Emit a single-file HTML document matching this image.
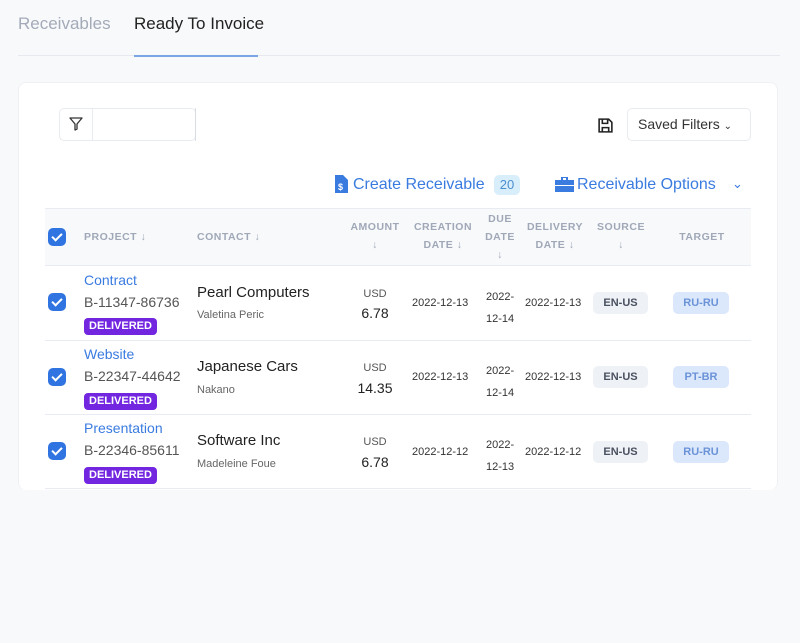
<!DOCTYPE html>
<html><head><style>
*{margin:0;padding:0;box-sizing:border-box}
body{width:800px;height:643px;background:#f8f9fb;font-family:"Liberation Sans",sans-serif;position:relative;overflow:hidden;color:#212529}
.a{position:absolute;white-space:nowrap}
.card{position:absolute;left:18px;top:82px;width:760px;height:408px;background:#fff;border-radius:8px;border:1px solid #eef0f4;border-bottom:none;overflow:hidden}
.bottom{position:absolute;left:8px;top:490px;width:792px;height:153px;background:#f8f9fb}
.th{font-size:10.5px;color:#a0a8b8;font-weight:bold;letter-spacing:.5px;line-height:18px;text-align:center}
.cb{position:absolute;width:18px;height:18px;border-radius:5px;background:#2f74e0}
.cb:after{content:"";position:absolute;left:6px;top:3px;width:4px;height:8px;border:solid #fff;border-width:0 2px 2px 0;transform:rotate(45deg)}
.pill{position:absolute;height:22px;border-radius:5px;font-size:11px;line-height:22px;text-align:center;font-weight:bold}
.src{background:#eef1f6;color:#4a5160;width:55px;left:593px}
.tgt{background:#dbe7fb;color:#6b93d8;width:56px;left:673px}
.del{position:absolute;left:84px;background:#7226e0;color:#fff;font-size:11px;font-weight:bold;border-radius:4px;padding:0 5px;height:17px;line-height:17px}
.hr{position:absolute;left:45px;width:706px;height:1px;background:#e8ecf2}
</style></head><body>
<div class="a" style="left:18px;top:14px;font-size:17px;color:#a3aab8">Receivables</div>
<div class="a" style="left:134px;top:14px;font-size:17px;color:#222">Ready To Invoice</div>
<div class="a" style="left:18px;top:55px;width:762px;height:1px;background:#e6e9ef"></div>
<div class="a" style="left:134px;top:55px;width:124px;height:2px;background:#7aa6e6"></div>
<div class="card"></div>
<div class="a" style="left:59px;top:108px;width:137px;height:33px;border:1px solid #e8ebf0;border-radius:5px;background:#fff"></div>
<div class="a" style="left:92px;top:108px;width:1px;height:33px;background:#e8ebf0"></div>
<div class="a" style="left:195px;top:108px;width:1px;height:33px;background:#d8dce3"></div>
<svg class="a" style="left:68px;top:116px" width="16" height="16" viewBox="0 0 16 16"><path d="M2 2h12l-5 6v5l-2 1V8z" fill="none" stroke="#333" stroke-width="1.3" stroke-linejoin="round"/></svg>
<svg class="a" style="left:597px;top:117px" width="17" height="17" viewBox="0 0 16 16"><path d="M2 2h9l3 3v9H2z M5 2v4h5V2 M5 14v-4h6v4" fill="none" stroke="#222" stroke-width="1.5"/></svg>
<div class="a" style="left:627px;top:108px;width:124px;height:33px;border:1px solid #e8ebf0;border-radius:5px;background:#fff;font-size:14px;line-height:31px;padding-left:10px;color:#333">Saved Filters <span style="font-size:10px">&#8964;</span></div>
<svg class="a" style="left:335px;top:175px" width="13" height="18" viewBox="0 0 13 18"><path d="M0 0h8l5 5v13H0z" fill="#3a7be0"/><text x="3" y="15" font-size="9" fill="#fff" font-family="Liberation Sans" font-weight="bold">$</text></svg>
<div class="a" style="left:353px;top:176px;font-size:16px;color:#3a7be0">Create Receivable</div>
<div class="a" style="left:494px;top:175px;width:26px;height:20px;background:#d9eefb;border-radius:5px;font-size:13px;color:#4a8fd0;text-align:center;line-height:20px">20</div>
<svg class="a" style="left:555px;top:176px" width="19" height="16" viewBox="0 0 19 16"><path d="M6 4V1h7v3h6v5H0V4z M8 2v2h3V2z M0 10h19v6H0z" fill="#3a7be0" fill-rule="evenodd"/></svg>
<div class="a" style="left:577px;top:176px;font-size:16px;color:#3a7be0">Receivable Options</div>
<div class="a" style="left:732px;top:176px;font-size:13px;color:#3a7be0">&#8964;</div>
<div class="a" style="left:45px;top:208px;width:706px;height:58px;background:#f7f9fb;border-top:1px solid #e8ecf2;border-bottom:1px solid #e8ecf2"></div>
<div class="cb" style="left:48px;top:228px"></div>
<div class="a th" style="left:84px;top:228px">PROJECT ↓</div>
<div class="a th" style="left:197px;top:228px">CONTACT ↓</div>
<div class="a th" style="left:346px;top:218px;width:58px">AMOUNT<br>↓</div>
<div class="a th" style="left:410px;top:218px;width:66px">CREATION<br>DATE ↓</div>
<div class="a th" style="left:484px;top:210px;width:32px">DUE<br>DATE<br>↓</div>
<div class="a th" style="left:524px;top:218px;width:62px">DELIVERY<br>DATE ↓</div>
<div class="a th" style="left:594px;top:218px;width:54px">SOURCE<br>↓</div>
<div class="a th" style="left:672px;top:228px;width:60px">TARGET</div>

<div class="hr" style="top:340px"></div><div class="hr" style="top:414px"></div><div class="hr" style="top:488px"></div>

<div class="cb" style="left:48px;top:293px"></div>
<div class="a" style="left:84px;top:272px;font-size:14px;color:#3a7be0">Contract</div>
<div class="a" style="left:84px;top:294px;font-size:14px;color:#555">B-11347-86736</div>
<div class="del" style="top:318px">DELIVERED</div>
<div class="a" style="left:197px;top:284px;font-size:15px;color:#222">Pearl Computers</div>
<div class="a" style="left:197px;top:309px;font-size:11px;color:#666">Valetina Peric</div>
<div class="a" style="left:346px;top:288px;width:58px;text-align:center;font-size:11px;color:#555">USD</div>
<div class="a" style="left:346px;top:305px;width:58px;text-align:center;font-size:14px;color:#222">6.78</div>
<div class="a" style="left:412px;top:297px;font-size:11px;color:#333">2022-12-13</div>
<div class="a" style="left:486px;top:286px;font-size:11px;color:#333;line-height:22px">2022-<br>12-14</div>
<div class="a" style="left:525px;top:297px;font-size:11px;color:#333">2022-12-13</div>
<div class="pill src" style="top:292px">EN-US</div><div class="pill tgt" style="top:292px">RU-RU</div>

<div class="cb" style="left:48px;top:368px"></div>
<div class="a" style="left:84px;top:346px;font-size:14px;color:#3a7be0">Website</div>
<div class="a" style="left:84px;top:368px;font-size:14px;color:#555">B-22347-44642</div>
<div class="del" style="top:393px">DELIVERED</div>
<div class="a" style="left:197px;top:358px;font-size:15px;color:#222">Japanese Cars</div>
<div class="a" style="left:197px;top:384px;font-size:11px;color:#666">Nakano</div>
<div class="a" style="left:346px;top:362px;width:58px;text-align:center;font-size:11px;color:#555">USD</div>
<div class="a" style="left:346px;top:380px;width:58px;text-align:center;font-size:14px;color:#222">14.35</div>
<div class="a" style="left:412px;top:371px;font-size:11px;color:#333">2022-12-13</div>
<div class="a" style="left:486px;top:360px;font-size:11px;color:#333;line-height:22px">2022-<br>12-14</div>
<div class="a" style="left:525px;top:371px;font-size:11px;color:#333">2022-12-13</div>
<div class="pill src" style="top:366px">EN-US</div><div class="pill tgt" style="top:366px">PT-BR</div>

<div class="cb" style="left:48px;top:442px"></div>
<div class="a" style="left:84px;top:420px;font-size:14px;color:#3a7be0">Presentation</div>
<div class="a" style="left:84px;top:442px;font-size:14px;color:#555">B-22346-85611</div>
<div class="del" style="top:467px">DELIVERED</div>
<div class="a" style="left:197px;top:432px;font-size:15px;color:#222">Software Inc</div>
<div class="a" style="left:197px;top:458px;font-size:11px;color:#666">Madeleine Foue</div>
<div class="a" style="left:346px;top:436px;width:58px;text-align:center;font-size:11px;color:#555">USD</div>
<div class="a" style="left:346px;top:454px;width:58px;text-align:center;font-size:14px;color:#222">6.78</div>
<div class="a" style="left:412px;top:446px;font-size:11px;color:#333">2022-12-12</div>
<div class="a" style="left:486px;top:434px;font-size:11px;color:#333;line-height:22px">2022-<br>12-13</div>
<div class="a" style="left:525px;top:446px;font-size:11px;color:#333">2022-12-12</div>
<div class="pill src" style="top:441px">EN-US</div><div class="pill tgt" style="top:441px">RU-RU</div>

<div class="bottom"></div>
</body></html>
